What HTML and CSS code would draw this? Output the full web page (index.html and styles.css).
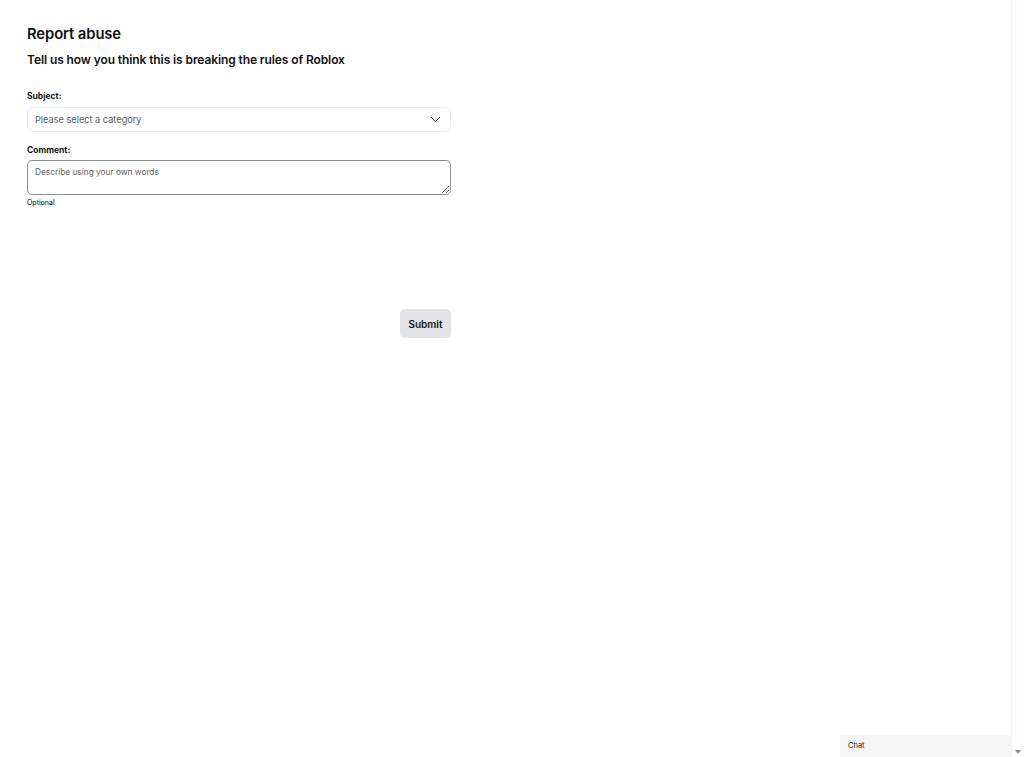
FILE: index.html
```html
<!DOCTYPE html>
<html lang="en">
  <head>
    <meta charset="UTF-8" />
    <meta name="viewport" content="width=device-width, initial-scale=1.0" />
    <link rel="stylesheet" href="styles.css">
  </head>
  <body>
    <div class="report-page">
      <h1 class="report-title">Report abuse</h1>
      <h2 class="report-subtitle">Tell us how you think this is breaking the rules of Roblox</h2>

      <form class="report-form">
        <label class="field-label">Subject:</label>
        <div class="select-box">
          <span class="select-text">Please select a category</span>
          <svg class="select-chevron" width="11" height="7" viewBox="0 0 11 7">
            <path d="M1 1 L5.5 5.5 L10 1" fill="none" stroke="#393b3d" stroke-width="1" />
          </svg>
        </div>

        <label class="field-label comment-label">Comment:</label>
        <textarea class="comment-box" placeholder="Describe using your own words"></textarea>
        <div class="field-hint">Optional</div>

        <div class="form-actions">
          <button type="button" class="submit-btn">Submit</button>
        </div>
      </form>
    </div>

    <!-- chat tab pinned at bottom right -->
    <div class="chat-tab">Chat</div>
    <div class="scroll-rail"><span class="scroll-arrow"></span></div>
  </body>
</html>
```

FILE: styles.css
```css
body {
  margin: 0;
  background-color: #fff;
  font-family: Inter, "Noto Sans", sans-serif;
  color: #111;
}

.report-page {
  padding: 25px 27px 0 27px;
  width: 424px;
}

.report-title {
  margin: 0;
  font-size: 14.8px;
  font-weight: 600;
  line-height: 18px;
  letter-spacing: -0.1px;
}

.report-subtitle {
  margin: 9px 0 0 0;
  font-size: 12px;
  font-weight: 600;
  line-height: 16px;
  letter-spacing: -0.1px;
}

.report-form {
  display: flex;
  flex-direction: column;
  margin-top: 23px;
}

.field-label {
  font-size: 8.5px;
  font-weight: 700;
  line-height: 10px;
  color: #111;
}

.select-box {
  margin-top: 6px;
  height: 23px;
  border: 1px solid #eeeeee;
  border-radius: 6px;
  display: flex;
  align-items: center;
  justify-content: space-between;
  padding: 0 8px 0 7px;
}

.select-text {
  font-size: 9.2px;
  color: #5b5d60;
}

.select-chevron {
  margin-right: 1px;
}

.comment-label {
  margin-top: 13px;
}

.comment-box {
  margin-top: 5px;
  height: 35px;
  box-sizing: border-box;
  border: 1px solid #8a8c8f;
  border-radius: 5px;
  padding: 6px 7px;
  font-family: Inter, "Noto Sans", sans-serif;
  font-size: 8.3px;
  resize: vertical;
}

.comment-box::placeholder {
  color: #606265;
}

.field-hint {
  margin-top: 3px;
  font-size: 7px;
  color: #000;
}

.form-actions {
  display: flex;
  justify-content: flex-end;
  margin-top: 102px;
}

.submit-btn {
  width: 51px;
  height: 29px;
  border: none;
  border-radius: 5px;
  background-color: #e3e4e7;
  font-family: Inter, "Noto Sans", sans-serif;
  font-size: 10px;
  font-weight: 600;
  color: #111;
}

.chat-tab {
  position: fixed;
  right: 13px;
  bottom: 0;
  width: 163px;
  height: 22px;
  padding-left: 8px;
  background-color: #f5f5f6;
  border-top-left-radius: 4px;
  border-top-right-radius: 4px;
  font-size: 7.5px;
  line-height: 22px;
  color: #222;
}

.scroll-rail {
  position: fixed;
  right: 0;
  top: 0;
  bottom: 0;
  width: 12px;
  background-color: #fdfdfd;
  border-left: 1px solid #f3f3f3;
}

.scroll-arrow {
  position: absolute;
  left: 3px;
  bottom: 3px;
  border-left: 3px solid transparent;
  border-right: 3px solid transparent;
  border-top: 4px solid #8a8a8a;
}
```
